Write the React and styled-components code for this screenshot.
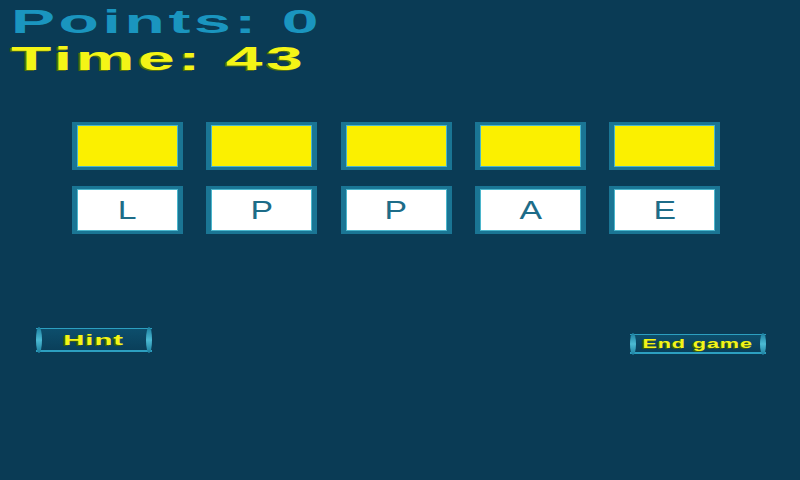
import React from 'react'
import styled, { createGlobalStyle } from 'styled-components'

const Global = createGlobalStyle`
html, body {
  margin: 0;
  padding: 0;
  background: #0a3b55;
  overflow: hidden;
}
#root {
  width: 800px;
  height: 480px;
}
`

const answer = ['', '', '', '', '']
const letters = ['L', 'P', 'P', 'A', 'E']

export default function App() {
  return (
    <Screen>
      <Global />
      <Header>
        <Score>Points: 0</Score>
        <Timer>Time: 43</Timer>
      </Header>
      <Board>
        <Row>
          {answer.map((l, i) => (
            <Tile key={'a' + i} slot>{l}</Tile>
          ))}
        </Row>
        <Row>
          {letters.map((l, i) => (
            <Tile key={'l' + i}>
              <Letter>{l}</Letter>
            </Tile>
          ))}
        </Row>
      </Board>
      <Actions>
        <GameButton hint>
          <Label>Hint</Label>
        </GameButton>
        <GameButton>
          <Label small>End game</Label>
        </GameButton>
      </Actions>
    </Screen>
  )
}

const Screen = styled.div`
width: 800px;
height: 480px;
background: #0a3b55;
display: flex;
flex-direction: column;
font-family: "Liberation Sans", Arial, sans-serif;
`

const Header = styled.div`
display: flex;
flex-direction: column;
padding-left: 11px;
`

const Big = styled.div`
font-size: 33px;
font-weight: bold;
line-height: 37px;
letter-spacing: 1.8px;
white-space: nowrap;
transform: scaleX(2);
transform-origin: left center;
width: fit-content;
`

const Score = styled(Big)`
color: #1a95bf;
margin-top: 3px;
`

const Timer = styled(Big)`
color: #f4f516;
text-shadow: -1px 1px 0 #4f6a14;
`

const Board = styled.div`
margin-top: 45px;
padding-left: 72px;
display: flex;
flex-direction: column;
gap: 16px;
`

const Row = styled.div`
display: grid;
grid-template-columns: repeat(5, 111px);
column-gap: 23.25px;
`

const Tile = styled.div`
height: 48px;
box-sizing: border-box;
border: 5px solid #1a7594;
border-top-width: 3px;
border-bottom-width: 3px;
box-shadow: inset 0 0 0 1px #4bb6cc;
background: ${props => (props.slot ? '#fbf000' : '#ffffff')};
display: flex;
align-items: center;
justify-content: center;
`

const Letter = styled.span`
display: inline-block;
font-size: 26px;
color: #1d6c88;
transform: scaleX(1.3);
`

const Actions = styled.div`
margin-top: 94px;
display: flex;
justify-content: space-between;
align-items: flex-start;
padding: 0 34px 0 36px;
`

const GameButton = styled.button`
position: relative;
width: ${props => (props.hint ? '116px' : '136px')};
height: ${props => (props.hint ? '24px' : '20px')};
margin-top: ${props => (props.hint ? '0' : '6px')};
border: none;
border-top: 1px solid #2c9fc0;
border-bottom: 2px solid #2c9fc0;
background: linear-gradient(#0d4e6c, #0a3f5a);
padding: 0;
display: flex;
align-items: center;
justify-content: center;
cursor: pointer;
&::before, &::after {
  content: '';
  position: absolute;
  top: -2px;
  bottom: -3px;
  width: 6px;
  border-radius: 50%;
  background: linear-gradient(#1b7e9e, #4cbad3, #1b7e9e);
}
&::before {
  left: 0;
}
&::after {
  right: 0;
}
`

const Label = styled.span`
display: inline-block;
font-family: "Liberation Sans", Arial, sans-serif;
font-weight: bold;
font-size: ${props => (props.small ? '12px' : '15px')};
letter-spacing: 0.5px;
color: #f4f516;
text-shadow: -1px 1px 0 #3d5a14;
transform: scaleX(${props => (props.small ? 1.8 : 1.95)});
`
